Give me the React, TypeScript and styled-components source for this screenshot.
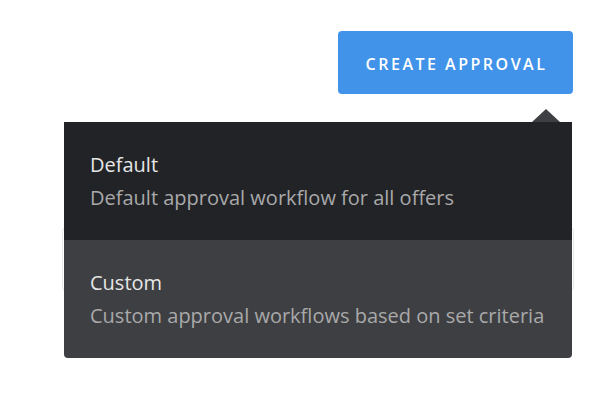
import * as React from 'react';
import styled, {createGlobalStyle} from 'styled-components';

const Global = createGlobalStyle`
    html, body {
        margin: 0;
        padding: 0;
        background: #ffffff;
        font-family: "Open Sans", "Noto Sans", sans-serif;
    }
`;

const Page = styled.div`
    width: 604px;
    height: 400px;
    box-sizing: border-box;
    padding: 31px 30px 0 62px;
    display: flex;
    flex-direction: column;
`;

const Toolbar = styled.div`
    display: flex;
    justify-content: flex-end;
`;

const MenuAnchor = styled.div`
    position: relative;
    margin-right: 1px;
`;

const CreateBtn = styled.button`
    display: block;
    width: 235px;
    height: 63px;
    border: none;
    border-radius: 4px;
    background: #4193e9;
    color: #ffffff;
    font-family: "Open Sans", sans-serif;
    font-size: 16px;
    font-weight: 600;
    letter-spacing: 2.5px;
    text-transform: uppercase;
    padding: 2px 0 0 2px;
`;

const Card = styled.div`
    margin-top: 133px;
    height: 62px;
    border: 1px solid #e6e6e6;
    border-radius: 4px;
`;

const Dropdown = styled.div`
    position: absolute;
    top: calc(100% + 28px);
    right: 1px;
    width: 508px;
    z-index: 2;
`;

const Arrow = styled.div`
    position: absolute;
    top: -13px;
    right: 12px;
    width: 0;
    height: 0;
    border-left: 14px solid transparent;
    border-right: 14px solid transparent;
    border-bottom: 13px solid #3e3f42;
`;

const Option = styled.div<{ dark?: boolean }>`
    height: 118px;
    box-sizing: border-box;
    padding: 0 26px;
    display: flex;
    flex-direction: column;
    justify-content: center;
    gap: 7px;
    background: ${(p) => (p.dark ? '#222327' : '#3e3f42')};
    border-radius: ${(p) => (p.dark ? '0' : '0 0 4px 4px')};
`;

const Title = styled.div`
    color: #e6e6e6;
    font-size: 20px;
    line-height: 26px;
`;

const Desc = styled.div`
    color: #a9a9aa;
    font-size: 20px;
    line-height: 26px;
`;

const options = [
    {title: 'Default', desc: 'Default approval workflow for all offers'},
    {title: 'Custom', desc: 'Custom approval workflows based on set criteria'},
];

export default function App() {
    return (
        <>
            <Global/>
            <Page>
                <Toolbar>
                    <MenuAnchor>
                        <CreateBtn>Create Approval</CreateBtn>
                        <Dropdown>
                            <Arrow/>
                            {options.map((o, i) => (
                                <Option key={o.title} dark={i === 0}>
                                    <Title>{o.title}</Title>
                                    <Desc>{o.desc}</Desc>
                                </Option>
                            ))}
                        </Dropdown>
                    </MenuAnchor>
                </Toolbar>
                <Card/>
            </Page>
        </>
    );
}
